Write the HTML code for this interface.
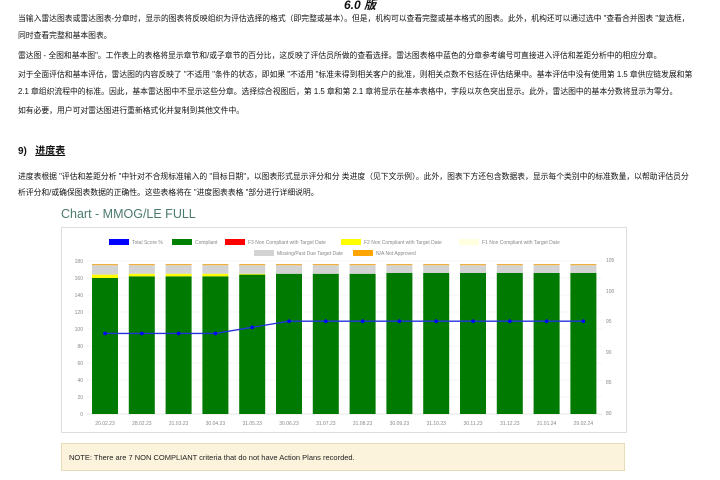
<!DOCTYPE html>
<html><head><meta charset="utf-8"><style>
body{margin:0;width:720px;height:480px;background:#fff;position:relative;overflow:hidden;font-family:"Liberation Sans","Noto Sans CJK SC",sans-serif;color:#111}
.t{position:absolute;left:18px;font-size:7.8px;white-space:nowrap;line-height:10px}
</style></head><body>
<div style="position:absolute;left:0;width:720px;top:-2px;text-align:center;font-size:12px;font-weight:bold;font-style:italic;line-height:14px">6.0 版</div>
<div class="t" style="top:14px">当输入雷达图表或雷达图表-分章时，显示的图表将反映组织为评估选择的格式（即完整或基本）。但是，机构可以查看完整或基本格式的图表。此外，机构还可以通过选中 "查看合并图表 "复选框，</div>
<div class="t" style="top:31px">同时查看完整和基本图表。</div>
<div class="t" style="top:51px">雷达图 - 全图和基本图"。工作表上的表格将显示章节和/或子章节的百分比，这反映了评估员所做的查看选择。雷达图表格中蓝色的分章参考编号可直接进入评估和差距分析中的相应分章。</div>
<div class="t" style="top:70px">对于全面评估和基本评估，雷达图的内容反映了 "不适用 "条件的状态，即如果 "不适用 "标准未得到相关客户的批准，则相关点数不包括在评估结果中。基本评估中没有使用第 1.5 章供应链发展和第</div>
<div class="t" style="top:87px">2.1 章组织流程中的标准。因此，基本雷达图中不显示这些分章。选择综合视图后，第 1.5 章和第 2.1 章将显示在基本表格中，字段以灰色突出显示。此外，雷达图中的基本分数将显示为零分。</div>
<div class="t" style="top:106px">如有必要，用户可对雷达图进行重新格式化并复制到其他文件中。</div>
<div style="position:absolute;left:18px;top:142px;font-size:10px;font-weight:bold">9)&nbsp;&nbsp;&nbsp;<span style="text-decoration:underline">进度表</span></div>
<div class="t" style="top:172px">进度表根据 "评估和差距分析 "中针对不合规标准输入的 "目标日期"，以图表形式显示评分和分 类进度（见下文示例）。此外，图表下方还包含数据表，显示每个类别中的标准数量，以帮助评估员分</div>
<div class="t" style="top:188px">析评分和/或确保图表数据的正确性。这些表格将在 "进度图表表格 "部分进行详细说明。</div>
<div style="position:absolute;left:61px;top:207px;font-size:12.5px;color:#4b7a6e">Chart - MMOG/LE FULL</div>
<div style="position:absolute;left:61px;top:227px;width:564px;height:204px;border:1px solid #ddd"></div>
<svg style="position:absolute;left:0;top:0" width="720" height="480" font-family="Liberation Sans" font-size="5" fill="#888">
<g>
<rect x="109" y="239" width="20" height="6" fill="#0000ff"/><text x="132" y="244">Total Score %</text>
<rect x="172" y="239" width="20" height="6" fill="#008000"/><text x="195" y="244">Compliant</text>
<rect x="225" y="239" width="20" height="6" fill="#ff0000"/><text x="248" y="244">F3 Non Compliant with Target Date</text>
<rect x="341" y="239" width="20" height="6" fill="#ffff00"/><text x="364" y="244">F2 Non Compliant with Target Date</text>
<rect x="459" y="239" width="20" height="6" fill="#ffffe0"/><text x="482" y="244">F1 Non Compliant with Target Date</text>
<rect x="254" y="250" width="20" height="6" fill="#d3d3d3"/><text x="277" y="255">Missing/Past Due Target Date</text>
<rect x="353" y="250" width="20" height="6" fill="#ffa500"/><text x="376" y="255">N/A Not Approved</text>
</g>
<g stroke="#eee" stroke-width="0.6">
<line x1="87" y1="261" x2="602" y2="261"/><line x1="87" y1="278" x2="602" y2="278"/><line x1="87" y1="295" x2="602" y2="295"/><line x1="87" y1="312" x2="602" y2="312"/><line x1="87" y1="329" x2="602" y2="329"/><line x1="87" y1="346" x2="602" y2="346"/><line x1="87" y1="363" x2="602" y2="363"/><line x1="87" y1="380" x2="602" y2="380"/><line x1="87" y1="397" x2="602" y2="397"/>
</g>
<line x1="87" y1="414" x2="602" y2="414" stroke="#ccc" stroke-width="0.6"/>
<g text-anchor="end">
<text x="83" y="263">180</text><text x="83" y="280">160</text><text x="83" y="297">140</text><text x="83" y="314">120</text><text x="83" y="331">100</text><text x="83" y="348">80</text><text x="83" y="365">60</text><text x="83" y="382">40</text><text x="83" y="399">20</text><text x="83" y="416">0</text>
</g>
<g>
<text x="606" y="262">105</text><text x="606" y="293">100</text><text x="606" y="323">95</text><text x="606" y="354">90</text><text x="606" y="384">85</text><text x="606" y="415">80</text>
</g>
<g id="bars"></g>
<g text-anchor="middle" id="lbl"></g>
<polyline id="ln" fill="none" stroke="#2233dd" stroke-width="1.3"/>
<g id="dots" fill="#0000ff"></g>
</svg>
<script>
var g=[160,162,162,162,164,165,165,165,166,166,166,166,166,166];
var y=[4,3,3,3,1,0,0,0,0,0,0,0,0,0];
var d=["20.02.23","28.02.23","31.03.23","30.04.23","31.05.23","30.06.23","31.07.23","31.08.23","30.09.23","31.10.23","30.11.23","31.12.23","31.01.24","29.02.24"];
var s=[93,93,93,93,94,95,95,95,95,95,95,95,95,95];
var k=0.85,b=414,h="",l="",p=[],dt="";
for(var i=0;i<14;i++){var x=92+i*36.8,c=b;
function r(v,col){var hh=v*k;c-=hh;h+='<rect x="'+x+'" y="'+c+'" width="26" height="'+hh+'" fill="'+col+'"/>';}
r(g[i],"#007a00");r(y[i],"#ffff00");r(175-g[i]-y[i],"#d3d3d3");r(1.5,"#f0b040");
l+='<text x="'+(x+13)+'" y="425">'+d[i]+'</text>';
var yy=413-(s[i]-80)/25*153;p.push((x+13)+","+yy);dt+='<circle cx="'+(x+13)+'" cy="'+yy+'" r="1.8"/>';}
document.getElementById("bars").innerHTML=h;document.getElementById("lbl").innerHTML=l;
document.getElementById("ln").setAttribute("points",p.join(" "));document.getElementById("dots").innerHTML=dt;
</script>
<div style="position:absolute;left:61px;top:443px;width:564px;height:28px;background:#fcf3dc;border:1px solid #e8dcb8;box-sizing:border-box"></div>
<div style="position:absolute;left:69px;top:453px;font-size:7.5px;color:#222">NOTE: There are 7 NON COMPLIANT criteria that do not have Action Plans recorded.</div>
</body></html>
